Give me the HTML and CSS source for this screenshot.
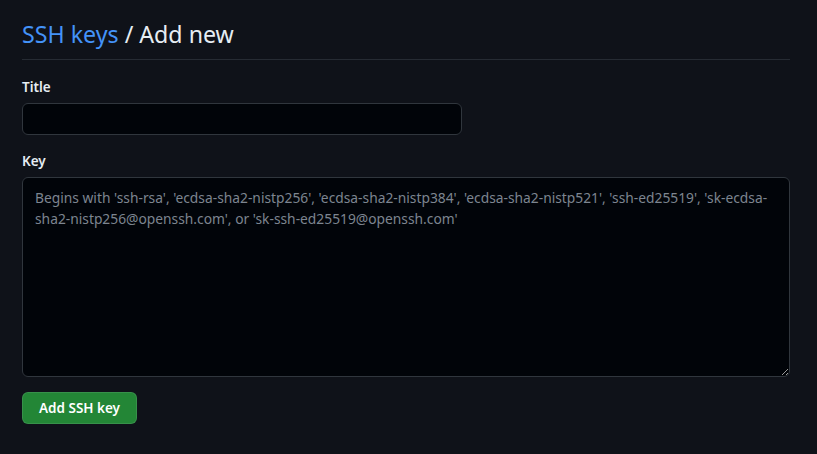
FILE: index.html
```html
<!DOCTYPE html>
<html lang="en">
<head>
<meta charset="utf-8">
<title>Add new SSH key</title>
<link rel="stylesheet" href="styles.css">
</head>
<body>
<main class="page">
  <div class="subhead">
    <h2 class="subhead-heading"><a class="crumb" href="#">SSH keys</a> / Add new</h2>
  </div>
  <form class="form">
    <div class="form-group">
      <label class="form-label" for="title">Title</label>
      <input class="form-input" id="title" type="text">
    </div>
    <div class="form-group form-group-last">
      <label class="form-label" for="key">Key</label>
      <textarea class="form-textarea" id="key" placeholder="Begins with 'ssh-rsa', 'ecdsa-sha2-nistp256', 'ecdsa-sha2-nistp384', 'ecdsa-sha2-nistp521', 'ssh-ed25519', 'sk-ecdsa-sha2-nistp256@openssh.com', or 'sk-ssh-ed25519@openssh.com'"></textarea>
    </div>
    <div class="form-actions">
      <button class="btn-primary" type="button">Add SSH key</button>
    </div>
  </form>
</main>
</body>
</html>
```

FILE: styles.css
```css
html, body {
  margin: 0;
  padding: 0;
  background: #0f1219;
  color: #e6edf3;
  font-family: "Noto Sans", "Open Sans", sans-serif;
  font-size: 14px;
}
.page {
  width: 768px;
  padding: 16px 27px 0 22px;
}
.subhead {
  border-bottom: 1px solid #262b33;
  padding-bottom: 7px;
  margin-bottom: 17px;
}
.subhead-heading {
  margin: 0;
  font-size: 23.2px;
  font-weight: 400;
  line-height: 36px;
  color: #e6edf3;
}
.crumb {
  color: #4493f8;
  text-decoration: none;
}
.form-group {
  margin-bottom: 16px;
}
.form-group-last {
  margin-bottom: 15px;
}
.form-label {
  display: block;
  font-weight: 600;
  font-size: 13.5px;
  line-height: 20px;
  margin-bottom: 6px;
  color: #e6edf3;
}
.form-input {
  display: block;
  box-sizing: border-box;
  width: 440px;
  height: 32px;
  background: #010409;
  border: 1px solid #30363d;
  border-radius: 6px;
  color: #e6edf3;
  font: inherit;
  padding: 5px 12px;
  outline: none;
}
.form-textarea {
  display: block;
  box-sizing: border-box;
  width: 768px;
  height: 200px;
  background: #010409;
  border: 1px solid #30363d;
  border-radius: 6px;
  color: #e6edf3;
  font: inherit;
  font-size: 13.8px;
  line-height: 21px;
  padding: 9px 12px;
  outline: none;
  resize: vertical;
}
.form-textarea::placeholder {
  color: #7d8590;
}
.btn-primary {
  box-sizing: border-box;
  height: 32px;
  width: 115px;
  padding: 0;
  background: #238636;
  color: #ffffff;
  border: 1px solid rgba(240, 246, 252, 0.1);
  border-radius: 6px;
  font: inherit;
  font-weight: 600;
  font-size: 13.5px;
}
```
